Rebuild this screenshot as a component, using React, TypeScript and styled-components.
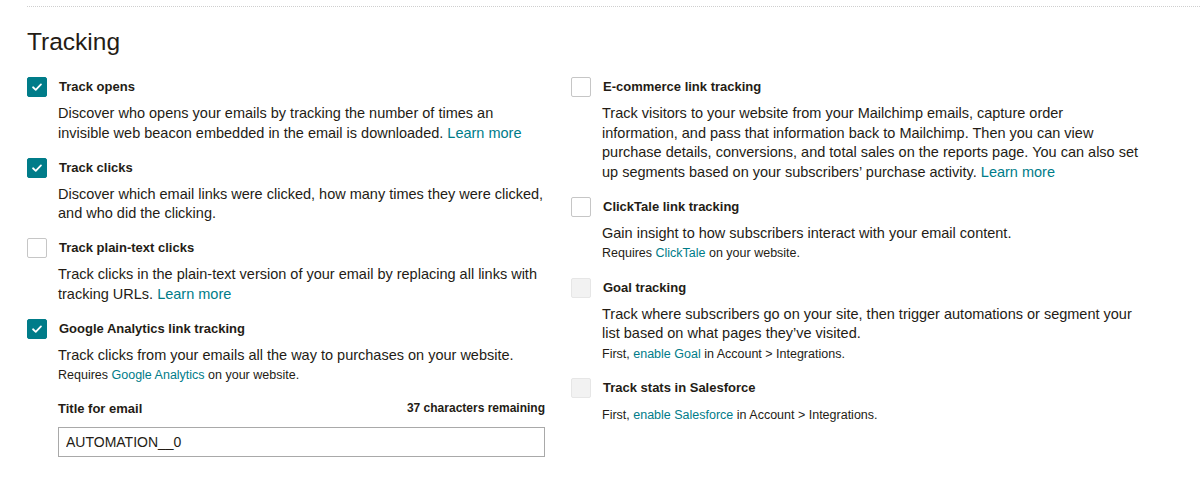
import React from "react";
import styled, { createGlobalStyle } from "styled-components";

const Global = createGlobalStyle`
  html, body { margin: 0; padding: 0; background: #ffffff; }
  body { font-family: "Liberation Sans", Arial, sans-serif; color: #241c15; }
`;

const Page = styled.div`
  padding: 6px 0 0 27px;
`;

const Section = styled.section`
  border-top: 1px dotted #cfcfcf;
`;

const Heading = styled.h2`
  margin: 20px 0 20px;
  font-size: 24.5px;
  line-height: 30px;
  font-weight: 400;
  color: #241c15;
`;

const Columns = styled.div`
  display: grid;
  grid-template-columns: 518px 571px;
  column-gap: 26px;
  align-items: start;
`;

const Column = styled.div`
  display: flex;
  flex-direction: column;
  gap: 14.5px;
`;

const Item = styled.div`
  display: flex;
  flex-direction: column;
`;

const Row = styled.label`
  display: flex;
  align-items: center;
  gap: 12px;
  height: 20px;
`;

const Box = styled.span<{ $state: "checked" | "empty" | "disabled" }>`
  box-sizing: border-box;
  width: 20px;
  height: 20px;
  flex: 0 0 20px;
  border-radius: 2px;
  display: flex;
  align-items: center;
  justify-content: center;
  background: ${(p) =>
    p.$state === "checked" ? "#007c89" : p.$state === "disabled" ? "#f2f2f2" : "#ffffff"};
  border: 1px solid
    ${(p) =>
      p.$state === "checked" ? "#007c89" : p.$state === "disabled" ? "#e6e6e6" : "#c6c6c6"};
`;

const Label = styled.span`
  font-size: 13px;
  font-weight: 700;
  line-height: 20px;
  color: #241c15;
`;

const Body = styled.div`
  margin-top: 7px;
  padding-left: 31px;
`;

const Desc = styled.p`
  margin: 0;
  font-size: 14.5px;
  line-height: 19.5px;
  color: #241c15;
`;

const Small = styled.p`
  margin: 0;
  font-size: 12.5px;
  line-height: 20px;
  color: #241c15;
`;

const Link = styled.a`
  color: #007c89;
  text-decoration: none;
`;

const Field = styled.div`
  margin-top: -1.5px;
  padding-left: 31px;
  display: flex;
  flex-direction: column;
  gap: 9px;
`;

const FieldHead = styled.div`
  display: flex;
  justify-content: space-between;
  align-items: center;
  height: 20px;
`;

const FieldLabel = styled.span`
  font-size: 13px;
  font-weight: 700;
`;

const Counter = styled.span`
  font-size: 12px;
  font-weight: 700;
`;

const Input = styled.input`
  box-sizing: border-box;
  width: 100%;
  height: 30px;
  border: 1px solid #a9a9a9;
  border-radius: 0;
  padding: 0 7px;
  font-family: "Liberation Sans", Arial, sans-serif;
  font-size: 14px;
  color: #241c15;
  outline: none;
`;

const Check = () => (
  <svg width="20" height="20" viewBox="0 0 20 20">
    <path d="M5.6 10.3 L8.6 13.1 L14.4 7.2" fill="none" stroke="#fff" strokeWidth="2" strokeLinecap="round" strokeLinejoin="round" />
  </svg>
);

type St = "checked" | "empty" | "disabled";

const Option = ({ state, label, children }: { state: St; label: string; children: React.ReactNode }) => (
  <Item>
    <Row>
      <Box $state={state}>{state === "checked" ? <Check /> : null}</Box>
      <Label>{label}</Label>
    </Row>
    <Body>{children}</Body>
  </Item>
);

export default function App() {
  return (
    <Page>
      <Global />
      <Section>
        <Heading>Tracking</Heading>
        <Columns>
          <Column>
            <Option state="checked" label="Track opens">
              <Desc>
                Discover who opens your emails by tracking the number of times an invisible web beacon
                embedded in the email is downloaded. <Link href="#">Learn more</Link>
              </Desc>
            </Option>
            <Option state="checked" label="Track clicks">
              <Desc>
                Discover which email links were clicked, how many times they were clicked, and who did
                the clicking.
              </Desc>
            </Option>
            <Option state="empty" label="Track plain-text clicks">
              <Desc>
                Track clicks in the plain-text version of your email by replacing all links with tracking
                URLs. <Link href="#">Learn more</Link>
              </Desc>
            </Option>
            <Option state="checked" label="Google Analytics link tracking">
              <Desc>Track clicks from your emails all the way to purchases on your website.</Desc>
              <Small>
                Requires <Link href="#">Google Analytics</Link> on your website.
              </Small>
            </Option>
            <Field>
              <FieldHead>
                <FieldLabel>Title for email</FieldLabel>
                <Counter>37 characters remaining</Counter>
              </FieldHead>
              <Input defaultValue="AUTOMATION__0" />
            </Field>
          </Column>
          <Column>
            <Option state="empty" label="E-commerce link tracking">
              <Desc>
                Track visitors to your website from your Mailchimp emails, capture order information, and
                pass that information back to Mailchimp. Then you can view purchase details, conversions,
                and total sales on the reports page. You can also set up segments based on your
                subscribers’ purchase activity. <Link href="#">Learn more</Link>
              </Desc>
            </Option>
            <Option state="empty" label="ClickTale link tracking">
              <Desc>Gain insight to how subscribers interact with your email content.</Desc>
              <Small>
                Requires <Link href="#">ClickTale</Link> on your website.
              </Small>
            </Option>
            <Option state="disabled" label="Goal tracking">
              <Desc>
                Track where subscribers go on your site, then trigger automations or segment your list
                based on what pages they’ve visited.
              </Desc>
              <Small>
                First, <Link href="#">enable Goal</Link> in Account &gt; Integrations.
              </Small>
            </Option>
            <Option state="disabled" label="Track stats in Salesforce">
              <Small>
                First, <Link href="#">enable Salesforce</Link> in Account &gt; Integrations.
              </Small>
            </Option>
          </Column>
        </Columns>
      </Section>
    </Page>
  );
}
